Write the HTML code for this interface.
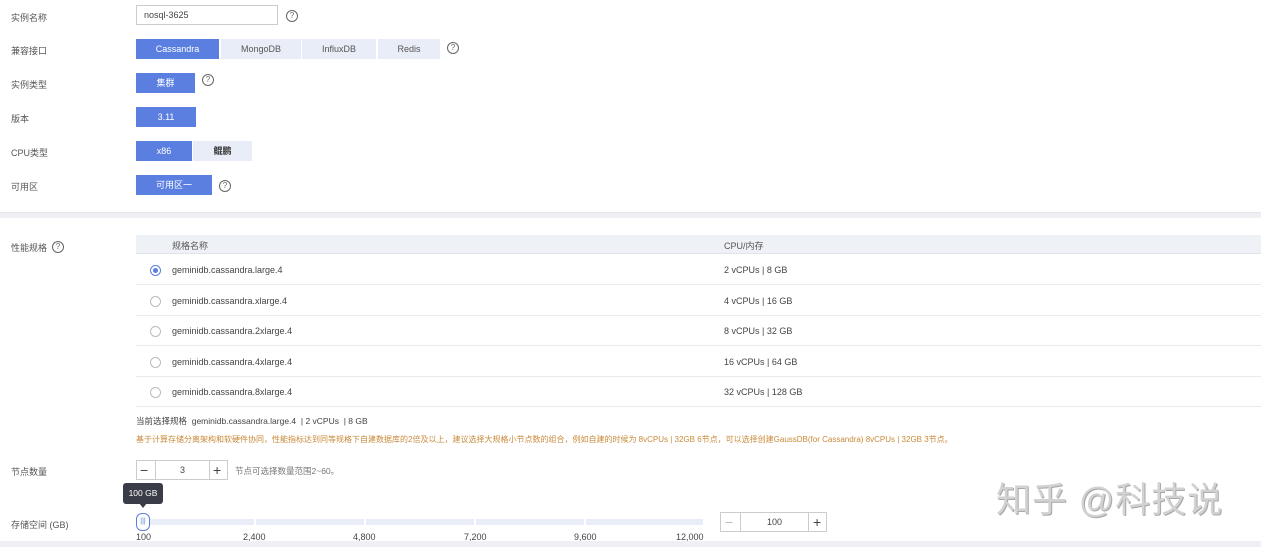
<!DOCTYPE html>
<html><head><meta charset="utf-8"><style>
*{margin:0;padding:0;box-sizing:border-box}
body{width:1261px;height:547px;background:#fff;position:relative;overflow:hidden;font-family:"Liberation Sans","Noto Sans CJK SC",sans-serif;font-size:9px;color:#444}
.a{position:absolute;white-space:nowrap}
.lbl{position:absolute;left:11px;font-size:9px;color:#555}
.btn{position:absolute;height:20px;line-height:20px;text-align:center;font-size:9px;background:#e9edf7;color:#555}
.on{background:#5b7fe0;color:#fff}
.q{position:absolute;width:12px;height:12px;border:1px solid #666;border-radius:50%;font-size:8px;line-height:10px;text-align:center;color:#666}
.row{position:absolute;left:136px;width:1125px;height:30px;border-bottom:1px solid #e8eaef;line-height:30px}
.rd{position:absolute;left:14px;top:10px;width:11px;height:11px;border:1px solid #bbb;border-radius:50%}
.seg{position:absolute;top:519px;height:6px;background:#e9edf7}
</style></head><body>
<div class="lbl" style="top:11px">实例名称</div>
<div class="a" style="left:136px;top:5px;width:142px;height:20px;border:1px solid #ccc;line-height:18px;padding-left:7px">nosql-3625</div>
<div class="q" style="left:286px;top:10px">?</div>

<div class="lbl" style="top:44px">兼容接口</div>
<div class="btn on" style="left:136px;top:39px;width:83px">Cassandra</div>
<div class="btn" style="left:221px;top:39px;width:80px">MongoDB</div>
<div class="btn" style="left:302px;top:39px;width:74px">InfluxDB</div>
<div class="btn" style="left:378px;top:39px;width:62px">Redis</div>
<div class="q" style="left:447px;top:42px">?</div>

<div class="lbl" style="top:78px">实例类型</div>
<div class="btn on" style="left:136px;top:73px;width:59px">集群</div>
<div class="q" style="left:202px;top:74px">?</div>

<div class="lbl" style="top:112px">版本</div>
<div class="btn on" style="left:136px;top:107px;width:60px">3.11</div>

<div class="lbl" style="top:146px">CPU类型</div>
<div class="btn on" style="left:136px;top:141px;width:56px">x86</div>
<div class="btn" style="left:193px;top:141px;width:59px;font-weight:bold;color:#333">鲲鹏</div>

<div class="lbl" style="top:180px">可用区</div>
<div class="btn on" style="left:136px;top:175px;width:76px">可用区一</div>
<div class="q" style="left:219px;top:180px">?</div>

<div class="a" style="left:0;top:212px;width:1261px;height:6px;background:#eef0f4;border-top:1px solid #e2e4ea"></div>

<div class="lbl" style="top:241px">性能规格</div>
<div class="q" style="left:52px;top:241px">?</div>
<div class="a" style="left:136px;top:235px;width:1125px;height:19px;background:#eef1f6;border-bottom:1px solid #dfe3ea"></div>
<div class="a" style="left:172px;top:239px;color:#555">规格名称</div>
<div class="a" style="left:724px;top:239px;color:#555">CPU/内存</div>

<div class="row" style="top:255px"><div class="rd" style="border-color:#5b7fe0"><div style="position:absolute;left:2px;top:2px;width:5px;height:5px;border-radius:50%;background:#5b7fe0"></div></div><span class="a" style="left:36px">geminidb.cassandra.large.4</span><span class="a" style="left:588px">2 vCPUs | 8 GB</span></div>
<div class="row" style="top:286px"><div class="rd"></div><span class="a" style="left:36px">geminidb.cassandra.xlarge.4</span><span class="a" style="left:588px">4 vCPUs | 16 GB</span></div>
<div class="row" style="top:316px"><div class="rd"></div><span class="a" style="left:36px">geminidb.cassandra.2xlarge.4</span><span class="a" style="left:588px">8 vCPUs | 32 GB</span></div>
<div class="row" style="top:347px"><div class="rd"></div><span class="a" style="left:36px">geminidb.cassandra.4xlarge.4</span><span class="a" style="left:588px">16 vCPUs | 64 GB</span></div>
<div class="row" style="top:377px"><div class="rd"></div><span class="a" style="left:36px">geminidb.cassandra.8xlarge.4</span><span class="a" style="left:588px">32 vCPUs | 128 GB</span></div>

<div class="a" style="left:136px;top:415px;font-size:8.5px">当前选择规格 &nbsp;geminidb.cassandra.large.4 &nbsp;| 2 vCPUs &nbsp;| 8 GB</div>
<div class="a" style="left:136px;top:434px;font-size:8px;color:#c98a3a">基于计算存储分离架构和软硬件协同，性能指标达到同等规格下自建数据库的2倍及以上，建议选择大规格小节点数的组合，例如自建的时候为 8vCPUs | 32GB 6节点，可以选择创建GaussDB(for Cassandra) 8vCPUs | 32GB 3节点。</div>

<div class="lbl" style="top:465px">节点数量</div>
<div class="a" style="left:136px;top:460px;width:92px;height:20px;border:1px solid #ccc"></div>
<div class="a" style="left:155px;top:460px;width:55px;height:20px;border-left:1px solid #ccc;border-right:1px solid #ccc;text-align:center;line-height:20px">3</div>
<div class="a" style="left:140px;top:460px;font-size:14px;line-height:20px">−</div>
<div class="a" style="left:213px;top:460px;font-size:14px;line-height:20px">+</div>
<div class="a" style="left:235px;top:465px;color:#777;font-size:8.5px">节点可选择数量范围2~60。</div>

<div class="a" style="left:123px;top:483px;width:40px;height:21px;background:#3a3d47;border-radius:3px;color:#fff;text-align:center;line-height:21px;font-size:8.5px">100 GB</div>
<div class="a" style="left:139px;top:503px;width:0;height:0;border-left:4px solid transparent;border-right:4px solid transparent;border-top:5px solid #3a3d47"></div>
<div class="lbl" style="top:518px">存储空间 (GB)</div>
<div class="seg" style="left:150px;width:104px"></div>
<div class="seg" style="left:256px;width:108px"></div>
<div class="seg" style="left:366px;width:108px"></div>
<div class="seg" style="left:476px;width:108px"></div>
<div class="seg" style="left:586px;width:117px"></div>
<div class="a" style="left:136px;top:513px;width:14px;height:18px;border:1.5px solid #5b7fe0;border-radius:6px;background:#fff;text-align:center;font-size:7px;line-height:15px;color:#5b7fe0">|||</div>
<div class="a" style="left:136px;top:532px">100</div>
<div class="a" style="left:243px;top:532px">2,400</div>
<div class="a" style="left:353px;top:532px">4,800</div>
<div class="a" style="left:464px;top:532px">7,200</div>
<div class="a" style="left:574px;top:532px">9,600</div>
<div class="a" style="left:676px;top:532px">12,000</div>

<div class="a" style="left:720px;top:512px;width:107px;height:20px;border:1px solid #ccc"></div>
<div class="a" style="left:740px;top:512px;width:69px;height:20px;border-left:1px solid #ccc;border-right:1px solid #ccc;text-align:center;line-height:20px">100</div>
<div class="a" style="left:725px;top:512px;font-size:14px;line-height:20px;color:#bbb">−</div>
<div class="a" style="left:813px;top:512px;font-size:14px;line-height:20px">+</div>

<div class="a" style="left:996px;top:472px;font-size:35px;letter-spacing:1px;color:#d2d2d2;text-shadow:1px 1px 0 #a8a8a8">知乎 @科技说</div>
<div class="a" style="left:0;top:541px;width:1261px;height:6px;background:#eef0f4"></div>
</body></html>
